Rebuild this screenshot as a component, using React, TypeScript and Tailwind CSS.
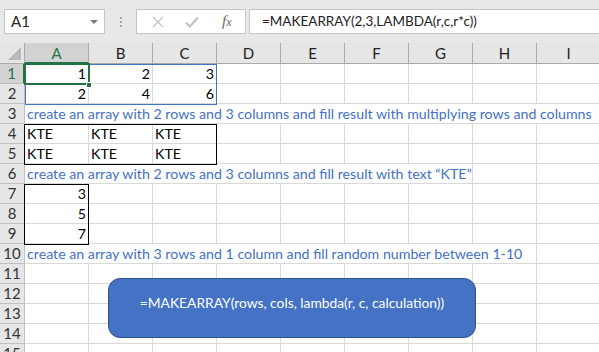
import React from "react";

const COLS = ["A", "B", "C", "D", "E", "F", "G", "H", "I"];
const FONT = { fontFamily: "Lato, 'Open Sans', sans-serif" };

type Row =
  | { kind: "cells"; values: string[]; align: "left" | "right" }
  | { kind: "note"; text: string; span: number };

const rows: Row[] = [
  { kind: "cells", values: ["1", "2", "3"], align: "right" },
  { kind: "cells", values: ["2", "4", "6"], align: "right" },
  { kind: "note", text: "create an array with 2 rows and 3 columns and fill result with multiplying rows and columns", span: 9 },
  { kind: "cells", values: ["KTE", "KTE", "KTE"], align: "left" },
  { kind: "cells", values: ["KTE", "KTE", "KTE"], align: "left" },
  { kind: "note", text: "create an array with 2 rows and 3 columns and fill result with text \u201cKTE\u201d", span: 7 },
  { kind: "cells", values: ["3"], align: "right" },
  { kind: "cells", values: ["5"], align: "right" },
  { kind: "cells", values: ["7"], align: "right" },
  { kind: "note", text: "create an array with 3 rows and 1 column and fill random number between 1-10", span: 8 },
  { kind: "cells", values: [], align: "left" },
  { kind: "cells", values: [], align: "left" },
  { kind: "cells", values: [], align: "left" },
  { kind: "cells", values: [], align: "left" },
  { kind: "cells", values: [], align: "left" },
];

const spanClass: Record<number, string> = {
  7: "col-span-7",
  8: "col-span-8",
  9: "col-span-9",
};

const cellBase = "border-r border-b border-[#d9d9d9] bg-white";

const Toolbar = () => (
  <div className="flex h-[43px] items-start bg-[#e8e8e8] pt-[9px] pl-[4px]">
    {/* Name box */}
    <div className="relative flex h-[25px] w-[101px] items-center border border-[#c6c6c6] bg-white pl-[6px] text-[15px] text-[#222]">
      A1
      <svg className="absolute right-[6px] top-[10px]" width="8" height="4" viewBox="0 0 8 4">
        <path d="M0 0h8L4 4z" fill="#7a7a7a" />
      </svg>
    </div>
    {/* separator dots */}
    <div className="ml-[15px] mt-[8px] flex flex-col gap-[2px]">
      <div className="h-[2px] w-[2px] bg-[#a8a8a8]" />
      <div className="h-[2px] w-[2px] bg-[#a8a8a8]" />
      <div className="h-[2px] w-[2px] bg-[#a8a8a8]" />
    </div>
    {/* formula buttons */}
    <div className="ml-[14px] flex h-[25px] w-[110px] items-center border border-[#c6c6c6] bg-white">
      <svg className="ml-[15px]" width="12" height="12" viewBox="0 0 12 12">
        <path d="M1 1l10 10M11 1L1 11" stroke="#c4c4c4" strokeWidth="1.3" />
      </svg>
      <svg className="ml-[21px]" width="14" height="12" viewBox="0 0 14 12">
        <path d="M1 6.5l4 4L13 1.5" stroke="#c4c4c4" strokeWidth="2.2" fill="none" />
      </svg>
      <span
        className="ml-[23px] text-[15px] italic text-[#666]"
        style={{ fontFamily: "'Liberation Serif', serif" }}
      >
        f<span className="text-[12px]">x</span>
      </span>
    </div>
    <div className="ml-[3px] flex h-[25px] flex-1 items-center border border-[#c6c6c6] border-r-0 bg-white pl-[12px] text-[13.5px] text-[#222]">
      =MAKEARRAY(2,3,LAMBDA(r,c,r*c))
    </div>
  </div>
);

export default function App() {
  return (
    <div className="h-[352px] w-[599px] overflow-hidden bg-white" style={FONT}>
      <Toolbar />
      <div className="relative">
        <div className="grid grid-cols-[25px_repeat(9,64px)] grid-rows-[21px] auto-rows-[20px] text-[14.2px] text-black">
          {/* header row */}
          <div className="relative border-r border-b border-[#ababab] bg-[#e6e6e6]">
            <svg className="absolute right-[3px] bottom-[3px]" width="13" height="13" viewBox="0 0 13 13">
              <path d="M13 0V13H0z" fill="#b8b8b8" />
            </svg>
          </div>
          {COLS.map((c, i) => (
            <div
              key={c}
              className={
                i === 0
                  ? "flex items-center justify-center border-r border-b-2 border-r-[#ababab] border-b-[#217346] bg-[#d2d2d2] pt-[1px] text-[15px] text-[#217346]"
                  : "flex items-center justify-center border-r border-b border-[#ababab] bg-[#e6e6e6] text-[15px] text-[#222]"
              }
            >
              {c}
            </div>
          ))}

          {rows.map((row, r) => (
            <React.Fragment key={r}>
              <div
                className={
                  r === 0
                    ? "flex items-center justify-center border-r-2 border-b border-r-[#217346] border-b-[#c0c0c0] bg-[#d2d2d2] text-[15px] text-[#217346]"
                    : "flex items-center justify-center border-r border-b border-[#c0c0c0] bg-[#e6e6e6] text-[15px] text-[#333]"
                }
              >
                {r + 1}
              </div>
              {row.kind === "note" ? (
                <>
                  <div className={`${spanClass[row.span]} ${cellBase} whitespace-nowrap pl-[2px] leading-[19px] text-[#4472c4]`}>
                    {row.text}
                  </div>
                  {COLS.slice(row.span).map((c) => (
                    <div key={c} className={cellBase} />
                  ))}
                </>
              ) : (
                COLS.map((c, i) => (
                  <div
                    key={c}
                    className={`${cellBase} whitespace-nowrap px-[2px] leading-[19px] ${row.align === "right" ? "text-right" : "text-left"}`}
                  >
                    {row.values[i] ?? ""}
                  </div>
                ))
              )}
            </React.Fragment>
          ))}
        </div>

        {/* spill range A1:C2 */}
        <div className="pointer-events-none absolute left-[25px] top-[21px] h-[41px] w-[192px] border border-[#4472c4]" />
        {/* bordered ranges */}
        <div className="pointer-events-none absolute left-[24px] top-[81px] h-[41px] w-[193px] border border-black" />
        <div className="pointer-events-none absolute left-[24px] top-[141px] h-[61px] w-[65px] border border-black" />
        {/* active cell A1 */}
        <div className="pointer-events-none absolute left-[24px] top-[20px] h-[22px] w-[66px] border-2 border-[#217346]" />
        <div className="pointer-events-none absolute left-[86px] top-[39px] h-[6px] w-[6px] border border-white bg-[#217346]" />

        {/* shape */}
        <div className="absolute left-[108px] top-[235px] h-[60px] w-[368px] rounded-[12px] border border-[#2f528f] bg-[#4472c4] pt-[14px] text-center text-[13.8px] leading-[20px] text-white">
          =MAKEARRAY(rows, cols, lambda(r, c, calculation))
        </div>
      </div>
    </div>
  );
}
